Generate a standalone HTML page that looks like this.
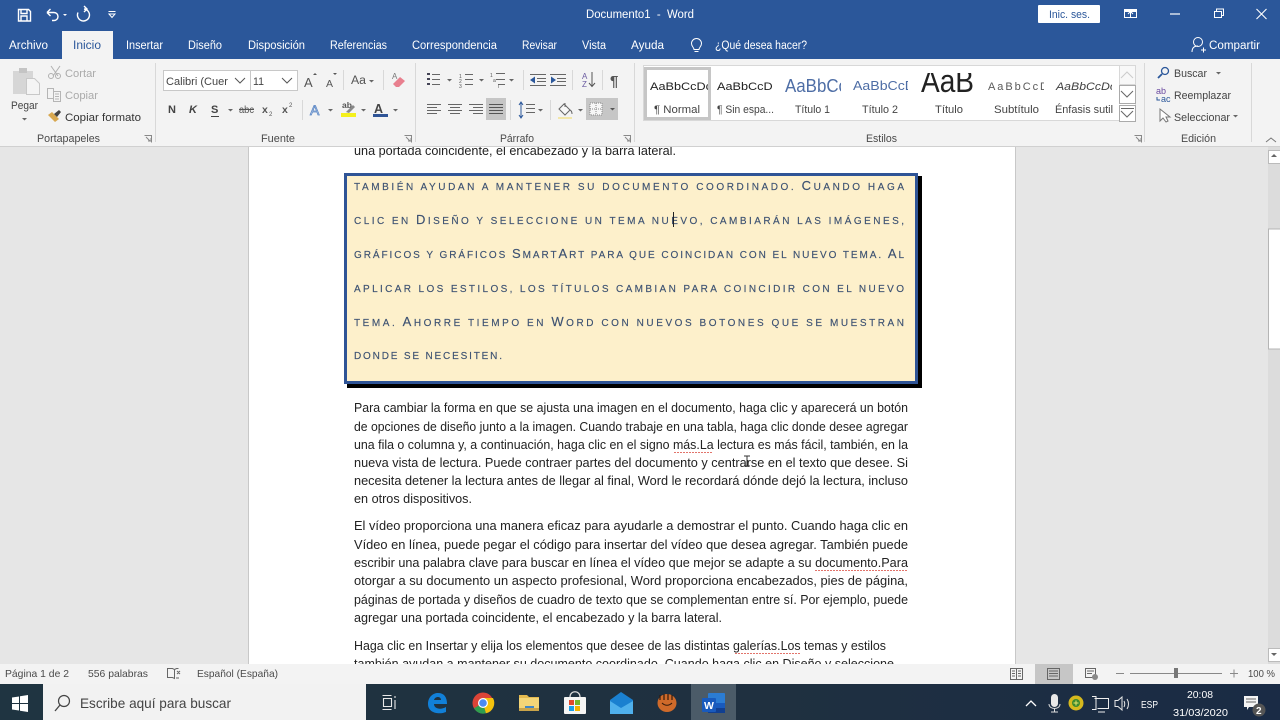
<!DOCTYPE html>
<html lang="es"><head><meta charset="utf-8"><title>Documento1 - Word</title>
<style>
html,body{margin:0;padding:0;width:1280px;height:720px;overflow:hidden;background:#e6e6e6}
svg{display:block;position:absolute;left:0;top:0;filter:blur(.3px)}
text{font-family:"Liberation Sans",sans-serif;white-space:pre}
.b{font-size:13px;fill:#222}
.c{font-size:10px;fill:#3d5272;stroke:#3d5272;stroke-width:.15}
.c tspan{font-size:13px}
.w{font-size:11.5px;fill:#fff}
.r{font-size:11px;fill:#444}
.g{font-size:11px;fill:#aaa}
.l{font-size:11px;fill:#4a4a4a}
.s{font-size:10.5px;fill:#4a4a4a}
.i{fill:none;stroke:#555;stroke-width:1}
.wi{fill:none;stroke:#fff;stroke-width:1.4}
.sq{fill:none;stroke:#d8463a;stroke-width:1;stroke-dasharray:2 1;opacity:.75}
</style></head><body>
<svg width="1280" height="720" viewBox="0 0 1280 720" xmlns="http://www.w3.org/2000/svg">
<defs>
<clipPath id="doc"><rect x="249" y="147" width="766" height="517"/></clipPath>
<clipPath id="p1"><rect x="645" y="70" width="63" height="30"/></clipPath>
<clipPath id="p2"><rect x="715" y="70" width="58" height="30"/></clipPath>
<clipPath id="p3"><rect x="783" y="70" width="58" height="30"/></clipPath>
<clipPath id="p4"><rect x="851" y="70" width="57" height="30"/></clipPath>
<clipPath id="p5"><rect x="918" y="73" width="58" height="30"/></clipPath>
<clipPath id="p6"><rect x="986" y="70" width="58" height="30"/></clipPath>
<clipPath id="p7"><rect x="1054" y="70" width="58" height="30"/></clipPath>
</defs>

<!-- document area -->
<rect width="1280" height="720" fill="#e6e6e6"/>
<rect x="249" y="147" width="766" height="517" fill="#fff"/>
<path d="M248.500 147V664M1015.500 147V664" stroke="#c8c8c8"/>
<!-- scrollbar -->
<rect x="1268" y="147" width="12" height="517" fill="#dcdcdc"/>
<rect x="1268.500" y="150.500" width="12" height="13" fill="#fff" stroke="#bbb"/>
<path d="M1271 157l3-3 3 3z" fill="#666"/>
<rect x="1268.500" y="229" width="12" height="120" fill="#fff" stroke="#b5b5b5"/>
<rect x="1268.500" y="648.500" width="12" height="13" fill="#fff" stroke="#bbb"/>
<path d="M1271 653l3 3 3-3z" fill="#666"/>

<g clip-path="url(#doc)">
<text class="b" x="354" y="155" textLength="322" lengthAdjust="spacingAndGlyphs">una portada coincidente, el encabezado y la barra lateral.</text>

<!-- shaded box -->
<rect x="347" y="176" width="575" height="212" fill="#000"/>
<rect x="344" y="173" width="574" height="211" fill="#2f5496"/>
<rect x="347" y="176" width="568" height="205" fill="#fdf0cb"/>
<text class="c" x="354" y="190" textLength="550" lengthAdjust="spacing">TAMBIÉN AYUDAN A MANTENER SU DOCUMENTO COORDINADO. <tspan>C</tspan>UANDO HAGA</text>
<text class="c" x="354" y="224" textLength="550" lengthAdjust="spacing">CLIC EN <tspan>D</tspan>ISEÑO Y SELECCIONE UN TEMA NUEVO, CAMBIARÁN LAS IMÁGENES,</text>
<text class="c" x="354" y="258" textLength="550" lengthAdjust="spacing">GRÁFICOS Y GRÁFICOS <tspan>S</tspan>MART<tspan>A</tspan>RT PARA QUE COINCIDAN CON EL NUEVO TEMA. <tspan>A</tspan>L</text>
<text class="c" x="354" y="292" textLength="550" lengthAdjust="spacing">APLICAR LOS ESTILOS, LOS TÍTULOS CAMBIAN PARA COINCIDIR CON EL NUEVO</text>
<text class="c" x="354" y="326" textLength="550" lengthAdjust="spacing">TEMA. <tspan>A</tspan>HORRE TIEMPO EN <tspan>W</tspan>ORD CON NUEVOS BOTONES QUE SE MUESTRAN</text>
<text class="c" x="354" y="359" textLength="148" lengthAdjust="spacing">DONDE SE NECESITEN.</text>
<path d="M673.500 212V227" stroke="#222"/>

<!-- paragraph 1 -->
<text class="b" x="354" y="412" textLength="554" lengthAdjust="spacingAndGlyphs">Para cambiar la forma en que se ajusta una imagen en el documento, haga clic y aparecerá un botón</text>
<text class="b" x="354" y="431" textLength="554" lengthAdjust="spacingAndGlyphs">de opciones de diseño junto a la imagen. Cuando trabaje en una tabla, haga clic donde desee agregar</text>
<text class="b" x="354" y="449" textLength="554" lengthAdjust="spacingAndGlyphs">una fila o columna y, a continuación, haga clic en el signo más.La lectura es más fácil, también, en la</text>
<text class="b" x="354" y="467" textLength="554" lengthAdjust="spacingAndGlyphs">nueva vista de lectura. Puede contraer partes del documento y centrarse en el texto que desee. Si</text>
<text class="b" x="354" y="485" textLength="554" lengthAdjust="spacingAndGlyphs">necesita detener la lectura antes de llegar al final, Word le recordará dónde dejó la lectura, incluso</text>
<text class="b" x="354" y="503" textLength="118" lengthAdjust="spacingAndGlyphs">en otros dispositivos.</text>
<path class="sq" d="M674 452.500H713"/>

<!-- paragraph 2 -->
<text class="b" x="354" y="530" textLength="554" lengthAdjust="spacingAndGlyphs">El vídeo proporciona una manera eficaz para ayudarle a demostrar el punto. Cuando haga clic en</text>
<text class="b" x="354" y="549" textLength="554" lengthAdjust="spacingAndGlyphs">Vídeo en línea, puede pegar el código para insertar del vídeo que desea agregar. También puede</text>
<text class="b" x="354" y="567" textLength="554" lengthAdjust="spacingAndGlyphs">escribir una palabra clave para buscar en línea el vídeo que mejor se adapte a su documento.Para</text>
<text class="b" x="354" y="585" textLength="554" lengthAdjust="spacingAndGlyphs">otorgar a su documento un aspecto profesional, Word proporciona encabezados, pies de página,</text>
<text class="b" x="354" y="604" textLength="554" lengthAdjust="spacingAndGlyphs">páginas de portada y diseños de cuadro de texto que se complementan entre sí. Por ejemplo, puede</text>
<text class="b" x="354" y="622" textLength="368" lengthAdjust="spacingAndGlyphs">agregar una portada coincidente, el encabezado y la barra lateral.</text>
<path class="sq" d="M815 570.500H908"/>

<!-- paragraph 3 -->
<text class="b" x="354" y="650" textLength="532" lengthAdjust="spacingAndGlyphs">Haga clic en Insertar y elija los elementos que desee de las distintas galerías.Los temas y estilos</text>
<text class="b" x="354" y="668" textLength="540" lengthAdjust="spacingAndGlyphs">también ayudan a mantener su documento coordinado. Cuando haga clic en Diseño y seleccione</text>
<path class="sq" d="M735 653.500H801"/>
<!-- I-beam -->
<path d="M744 456h6M747 456v10M744 466h6" stroke="#333" fill="none"/>
</g>

<!-- title bar + tabs -->
<rect width="1280" height="59" fill="#2b579a"/>
<rect x="62" y="31" width="51" height="28" fill="#f3f3f3"/>
<!-- QAT -->
<path d="M18.500 9.500h10l2 2v9.500h-12z M21 9.500v4h6v-4 M21 21v-5h6v5" class="wi"/>
<path d="M47 12.500h7a4 4 0 0 1 0 8h-2M47 12.500l3.500-3.500M47 12.500l3.500 3.500" class="wi"/>
<path d="M63 14l2 2 2-2z" fill="#fff"/>
<path d="M84 9a6 6 0 1 1-6 3.500M84 6l3 3-3 3" class="wi"/>
<path d="M108.500 11.500h7M109 14l3 3.500 3-3.500z" fill="none" stroke="#fff"/>
<!-- title -->
<text x="586" y="18" font-size="11.500" fill="#fff" textLength="108" lengthAdjust="spacingAndGlyphs">Documento1  -  Word</text>
<rect x="1038" y="5" width="62" height="18" rx="1" fill="#fff"/>
<text x="1049" y="18" font-size="11" fill="#2b579a" textLength="41" lengthAdjust="spacingAndGlyphs">Inic. ses.</text>
<rect x="1124.500" y="9.500" width="12" height="8" fill="none" stroke="#fff"/><rect x="1125" y="10" width="11" height="2" fill="#fff"/><path d="M1130.500 17v-5M1128 14l2.500-2.500 2.500 2.500" fill="none" stroke="#fff"/>
<path d="M1170 14h10" stroke="#fff" stroke-width="1.200"/>
<path d="M1214.500 11.500h7v6h-7zM1216.500 11v-2h7v6.500h-2" fill="none" stroke="#fff"/>
<path d="M1256.500 9l10 10M1266.500 9l-10 10" stroke="#fff" stroke-width="1.100"/>

<!-- tabs -->
<text class="w" x="9" y="49" textLength="39" lengthAdjust="spacingAndGlyphs">Archivo</text>
<text class="w" x="73" y="49" textLength="28" lengthAdjust="spacingAndGlyphs" style="fill:#2b579a">Inicio</text>
<text class="w" x="126" y="49" textLength="37" lengthAdjust="spacingAndGlyphs">Insertar</text>
<text class="w" x="188" y="49" textLength="34" lengthAdjust="spacingAndGlyphs">Diseño</text>
<text class="w" x="248" y="49" textLength="57" lengthAdjust="spacingAndGlyphs">Disposición</text>
<text class="w" x="330" y="49" textLength="57" lengthAdjust="spacingAndGlyphs">Referencias</text>
<text class="w" x="412" y="49" textLength="85" lengthAdjust="spacingAndGlyphs">Correspondencia</text>
<text class="w" x="522" y="49" textLength="35" lengthAdjust="spacingAndGlyphs">Revisar</text>
<text class="w" x="582" y="49" textLength="24" lengthAdjust="spacingAndGlyphs">Vista</text>
<text class="w" x="631" y="49" textLength="33" lengthAdjust="spacingAndGlyphs">Ayuda</text>
<path d="M694 49.500c0-2-2.500-3-2.500-6a5 5 0 0 1 10 0c0 3-2.500 4-2.500 6zM694.500 51.500h4" fill="none" stroke="#fff"/>
<text class="w" x="715" y="49" textLength="92" lengthAdjust="spacingAndGlyphs">¿Qué desea hacer?</text>
<circle cx="1198" cy="42" r="4.500" fill="none" stroke="#fff"/><path d="M1192 52c0-4 2-6 6-6M1201 50h5M1203.500 47.500v5" fill="none" stroke="#fff"/>
<text class="w" x="1209" y="49" textLength="51" lengthAdjust="spacingAndGlyphs">Compartir</text>

<!-- ribbon -->
<rect y="59" width="1280" height="87" fill="#f3f3f3"/>
<path d="M0 146.500H1280" stroke="#d0d0d0"/>
<path d="M155.500 63V142M415.500 63V142M634.500 63V142M1144.500 63V142M1251.500 63V142" stroke="#d8d8d8"/>

<!-- clipboard -->
<rect x="13" y="71" width="20" height="23" fill="#d6d6d6"/><rect x="19" y="68" width="8" height="5" fill="#c4c4c4"/>
<path d="M26.500 78.500h8l5 5v11h-13z" fill="#f4f4f4" stroke="#c8c8c8"/>
<text class="r" x="11" y="109" textLength="27" lengthAdjust="spacingAndGlyphs">Pegar</text>
<path d="M22 118l2.500 2.500 2.500-2.500z" fill="#666"/>
<path d="M51 66l7 10M60 66l-7 10" stroke="#b0b0b0" fill="none"/><circle cx="51" cy="76" r="2.500" fill="none" stroke="#b0b0b0"/><circle cx="58" cy="76" r="2.500" fill="none" stroke="#b0b0b0"/>
<text class="g" x="65" y="77" textLength="31" lengthAdjust="spacingAndGlyphs">Cortar</text>
<path d="M47.500 88.500h6v10h-6zM53.500 91.500h7v10h-7zM55 94h4M55 96.500h4M55 99h4" fill="none" stroke="#b5b5b5"/>
<text class="g" x="65" y="99" textLength="33" lengthAdjust="spacingAndGlyphs">Copiar</text>
<path d="M48 115l7 7 4-3-7-7z" fill="#d8a850"/><path d="M54 114l5-4 2 2-4 5z" fill="#444"/>
<text class="r" x="65" y="121" textLength="76" lengthAdjust="spacingAndGlyphs" style="fill:#333">Copiar formato</text>
<text class="l" x="37" y="142" textLength="63" lengthAdjust="spacingAndGlyphs">Portapapeles</text>
<path d="M144.500 135.500h7v7M146 137l4 4M148 141h3v-3" fill="none" stroke="#888"/>

<!-- font -->
<rect x="163.500" y="70.500" width="87" height="20" fill="#fff" stroke="#c8c8c8"/>
<rect x="250.500" y="70.500" width="47" height="20" fill="#fff" stroke="#c8c8c8"/>
<text class="r" x="166" y="85" textLength="62" lengthAdjust="spacingAndGlyphs">Calibri (Cuer</text>
<text class="r" x="253" y="85" textLength="11" lengthAdjust="spacingAndGlyphs">11</text>
<path d="M235 78l5 5 5-5M282 78l5 5 5-5" fill="none" stroke="#555"/>
<text x="304" y="87" font-size="13" fill="#555">A</text><path d="M313 75l2-2 2 2z" fill="#555"/>
<text x="326" y="87" font-size="10.500" fill="#555">A</text><path d="M333 73l2 2 2-2z" fill="#555"/>
<path d="M343.500 70V90M383.500 70V90" stroke="#d8d8d8"/>
<text x="351" y="84" font-size="11.500" fill="#555" textLength="15" lengthAdjust="spacingAndGlyphs">Aa</text>
<path d="M369 80l2.500 2.500 2.500-2.500z" fill="#666"/>
<path d="M393 84l7-7 5 4-6 6h-3z" fill="#e87f8e"/><text x="392" y="79" font-size="8" fill="#777">A</text>
<text x="168" y="113" font-size="11" font-weight="bold" fill="#444">N</text>
<text x="189" y="113" font-size="11" font-weight="bold" font-style="italic" fill="#444">K</text>
<text x="211" y="113" font-size="11" font-weight="bold" fill="#444">S</text><path d="M211 116.500h8" stroke="#444"/>
<path d="M228 109l2.500 2.500 2.500-2.500z" fill="#666"/>
<text x="239" y="113" font-size="10" fill="#555" textLength="15" lengthAdjust="spacingAndGlyphs">abc</text><path d="M239 109.500h15" stroke="#555"/>
<text x="262" y="113" font-size="10.500" font-weight="bold" fill="#555">x</text><text x="269" y="116" font-size="6" fill="#555">2</text>
<text x="282" y="113" font-size="10.500" font-weight="bold" fill="#555">x</text><text x="289" y="107" font-size="6" fill="#555">2</text>
<path d="M302.500 100V120" stroke="#d8d8d8"/>
<text x="310" y="115" font-size="14" fill="#d8e6f6" stroke="#5b86c4" stroke-width=".8">A</text>
<path d="M328 109l2.500 2.500 2.500-2.500z" fill="#666"/>
<text x="342" y="108" font-size="8.500" fill="#555" font-weight="bold">ab</text><path d="M346 112l7-7 2 2-6 6z" fill="#888"/>
<rect x="341" y="113" width="15" height="4" fill="#f4f01c"/>
<path d="M361 109l2.500 2.500 2.500-2.500z" fill="#666"/>
<text x="374" y="113" font-size="12.500" fill="#444" font-weight="bold">A</text>
<rect x="373" y="114" width="15" height="3" fill="#2f5496"/>
<path d="M393 109l2.500 2.500 2.500-2.500z" fill="#666"/>
<text class="l" x="261" y="142" textLength="34" lengthAdjust="spacingAndGlyphs">Fuente</text>
<path d="M404.500 135.500h7v7M406 137l4 4M408 141h3v-3" fill="none" stroke="#888"/>

<!-- paragraph -->
<g fill="none" stroke="#666">
<path d="M427 74h3M427 79h3M427 84h3" stroke="#445" stroke-width="2"/><path d="M432 74.500h8M432 79.500h8M432 84.500h8"/>
<path d="M465 74.500h8M465 79.500h8M465 84.500h8"/>
<path d="M496 73.500h9M496 79.500h9M498 84.500h7"/>
<path d="M530 74.500h16M537 78.500h9M537 81.500h9M530 85.500h16"/>
<path d="M550 74.500h16M550 78.500h9M550 81.500h9M550 85.500h16" transform="translate(7 0)" style="display:none"/>
<path d="M550 74.500h16M557 78.500h9M557 81.500h9M550 85.500h16"/>
</g>
<text x="459" y="78" font-size="5" fill="#555">1</text><text x="459" y="83" font-size="5" fill="#555">2</text><text x="459" y="88" font-size="5" fill="#555">3</text>
<text x="490" y="77" font-size="5" fill="#555">1</text><text x="493" y="82" font-size="5" fill="#555">a</text><text x="498" y="88" font-size="5" fill="#555">i</text>
<path d="M447 79l2.500 2.500 2.500-2.500zM479 79l2.500 2.500 2.500-2.500zM509 79l2.500 2.500 2.500-2.500z" fill="#666"/>
<path d="M530 80l5-3.500v7zM556 80l-5-3.500v7z" fill="#2b579a"/>
<path d="M523.500 70V90M572.500 70V90M602.500 70V90M510.500 100V120M550.500 100V120" stroke="#d8d8d8"/>
<text x="582" y="79" font-size="8" fill="#6a5aa0">A</text><text x="582" y="87" font-size="8" fill="#6a5aa0">Z</text>
<path d="M592 72v14M589 83l3 3.500 3-3.500" fill="none" stroke="#555"/>
<text x="610" y="86" font-size="15" fill="#555" font-weight="bold">¶</text>
<rect x="486" y="98" width="20" height="22" fill="#c6c6c6"/>
<g fill="none" stroke="#666">
<path d="M427 104.500h14M427 107.500h10M427 110.500h14M427 113.500h10"/>
<path d="M448 104.500h14M450 107.500h10M448 110.500h14M450 113.500h10"/>
<path d="M469 104.500h14M473 107.500h10M469 110.500h14M473 113.500h10"/>
<path d="M489 104.500h14M489 107.500h14M489 110.500h14M489 113.500h14" stroke="#555"/>
<path d="M526 104.500h9M526 108.500h9M526 112.500h9"/>
</g>
<path d="M521 103v14M519 105l2-3 2 3M519 115l2 3 2-3" fill="none" stroke="#2b579a"/>
<path d="M538 109l2.500 2.500 2.500-2.500zM578 109l2.500 2.500 2.500-2.500z" fill="#666"/>
<path d="M559 109l5-5 6 6-5 5z" fill="#f8f8f8" stroke="#666"/><path d="M565 103v4M570 110c2 1 2 3 2 4" fill="none" stroke="#666"/><path d="M558 118h14" stroke="#f2e6a8" stroke-width="2"/>
<rect x="586" y="98" width="32" height="22" fill="#c6c6c6"/>
<rect x="590" y="103" width="12" height="12" fill="#f6f6f6" stroke="#888" stroke-dasharray="1 1"/><path d="M596 103v12M590 109h12" stroke="#888" stroke-dasharray="1 1"/>
<path d="M610 108l2.500 2.500 2.500-2.500z" fill="#555"/>
<text class="l" x="500" y="142" textLength="34" lengthAdjust="spacingAndGlyphs">Párrafo</text>
<path d="M623.500 135.500h7v7M625 137l4 4M627 141h3v-3" fill="none" stroke="#888"/>

<!-- styles -->
<rect x="643.500" y="65.500" width="492" height="55" fill="#fff" stroke="#d8d8d8"/>
<rect x="645.500" y="68.500" width="64" height="50" fill="none" stroke="#c6c6c6" stroke-width="3"/>
<text clip-path="url(#p1)" x="650" y="90" font-size="11" fill="#222" textLength="62" lengthAdjust="spacingAndGlyphs">AaBbCcDc</text>
<text clip-path="url(#p2)" x="717" y="90" font-size="11" fill="#222" textLength="62" lengthAdjust="spacingAndGlyphs">AaBbCcDc</text>
<text clip-path="url(#p3)" x="785" y="92" font-size="18" fill="#2f5496" textLength="62" lengthAdjust="spacingAndGlyphs" opacity=".85">AaBbCc</text>
<text clip-path="url(#p4)" x="853" y="90" font-size="13" fill="#2f5496" textLength="62" lengthAdjust="spacingAndGlyphs" opacity=".85">AaBbCcD</text>
<text clip-path="url(#p5)" x="921" y="92" font-size="32" fill="#222" textLength="53" lengthAdjust="spacingAndGlyphs">AaB</text>
<text clip-path="url(#p6)" x="988" y="90" font-size="11" fill="#5a5a5a" textLength="60" lengthAdjust="spacing">AaBbCcD</text>
<text clip-path="url(#p7)" x="1056" y="90" font-size="11" font-style="italic" fill="#404040" textLength="60" lengthAdjust="spacingAndGlyphs">AaBbCcDc</text>
<text class="r" x="654" y="113" textLength="46" lengthAdjust="spacingAndGlyphs">¶ Normal</text>
<text class="r" x="717" y="113" textLength="57" lengthAdjust="spacingAndGlyphs">¶ Sin espa...</text>
<text class="r" x="795" y="113" textLength="35" lengthAdjust="spacingAndGlyphs">Título 1</text>
<text class="r" x="862" y="113" textLength="36" lengthAdjust="spacingAndGlyphs">Título 2</text>
<text class="r" x="935" y="113" textLength="28" lengthAdjust="spacingAndGlyphs">Título</text>
<text class="r" x="994" y="113" textLength="45" lengthAdjust="spacingAndGlyphs">Subtítulo</text>
<text class="r" x="1055" y="113" textLength="58" lengthAdjust="spacingAndGlyphs">Énfasis sutil</text>
<rect x="1119.500" y="65.500" width="16" height="19" fill="#f8f8f8" stroke="#d8d8d8"/>
<rect x="1119.500" y="85.500" width="16" height="18" fill="#fff" stroke="#aaa"/>
<rect x="1119.500" y="105.500" width="16" height="16" fill="#fff" stroke="#aaa"/>
<path d="M1121 78l6-6 6 6" fill="none" stroke="#ccc"/>
<path d="M1121 91l6 6 6-6" fill="none" stroke="#666"/>
<path d="M1121 108.500h13M1121 111l6 6 6-6" fill="none" stroke="#666"/>
<text class="l" x="866" y="142" textLength="31" lengthAdjust="spacingAndGlyphs">Estilos</text>
<path d="M1134.500 135.500h7v7M1136 137l4 4M1138 141h3v-3" fill="none" stroke="#888"/>

<!-- editing -->
<circle cx="1165" cy="71" r="3.500" fill="none" stroke="#2b579a" stroke-width="1.300"/><path d="M1162 74l-4 4" stroke="#2b579a" stroke-width="1.800"/>
<text class="r" x="1174" y="77" textLength="33" lengthAdjust="spacingAndGlyphs">Buscar</text>
<path d="M1216 72l2.500 2.500 2.500-2.500z" fill="#666"/>
<text x="1156" y="94" font-size="9" fill="#6a4aa0">ab</text><text x="1161" y="102" font-size="9" fill="#2b579a">ac</text>
<path d="M1157 97v3h3" fill="none" stroke="#2b579a"/>
<text class="r" x="1174" y="99" textLength="57" lengthAdjust="spacingAndGlyphs">Reemplazar</text>
<path d="M1160 109v12l3-3 3 4 2-1-2-4h4z" fill="#fff" stroke="#777"/>
<text class="r" x="1174" y="121" textLength="56" lengthAdjust="spacingAndGlyphs">Seleccionar</text>
<path d="M1233 115l2.500 2.500 2.500-2.500z" fill="#666"/>
<text class="l" x="1181" y="142" textLength="35" lengthAdjust="spacingAndGlyphs">Edición</text>
<path d="M1266 142l5-4 5 4" fill="none" stroke="#777"/>

<!-- status bar -->
<rect y="664" width="1280" height="20" fill="#f3f3f3"/>
<text class="s" x="5" y="677" textLength="64" lengthAdjust="spacingAndGlyphs">Página 1 de 2</text>
<text class="s" x="88" y="677" textLength="60" lengthAdjust="spacingAndGlyphs">556 palabras</text>
<path d="M167.500 668.500h5l2 1v9l-2-1h-5zM174.500 669.500l2-1h2M177 671l3 3M180 671l-3 3M176 678h3" fill="none" stroke="#666"/>
<text class="s" x="197" y="677" textLength="81" lengthAdjust="spacingAndGlyphs">Español (España)</text>
<rect x="1035" y="664" width="38" height="20" fill="#c6c6c6"/>
<path d="M1010.500 668.500h12v11h-12zM1016.500 668.500v11M1012 671h3M1012 673.500h3M1012 676h3M1018 671h3M1018 673.500h3M1018 676h3" fill="none" stroke="#666"/>
<path d="M1047.500 668.500h12v11h-12zM1049 671h9M1049 673.500h9M1049 676h9" fill="none" stroke="#666"/>
<path d="M1085.500 668.500h10v9h-10zM1087 671h7M1087 673.500h5" fill="none" stroke="#666"/><circle cx="1095" cy="677" r="3" fill="#888"/>
<path d="M1116 673.500h8M1130 673.500h92M1230 673.500h8M1234 669.500v8" stroke="#888" fill="none"/>
<rect x="1174" y="668" width="4" height="10" fill="#777"/>
<text class="s" x="1248" y="677" textLength="27" lengthAdjust="spacingAndGlyphs">100 %</text>

<!-- taskbar -->
<defs><linearGradient id="tb" x1="0" x2="1" y1="0" y2="0"><stop offset="0" stop-color="#1f3441"/><stop offset=".6" stop-color="#1f3040"/><stop offset="1" stop-color="#1a2b45"/></linearGradient></defs>
<rect y="684" width="1280" height="36" fill="url(#tb)"/>
<path d="M12 697.500l7-1v6.500h-7zM20 696.300l8-1.300v8h-8zM12 704h7v6.500l-7-1zM20 704h8v8l-8-1.300z" fill="#fff"/>
<rect x="43" y="684" width="323" height="36" fill="#f2f2f2"/>
<circle cx="64" cy="701" r="5.500" fill="none" stroke="#444" stroke-width="1.200"/><path d="M60 705l-5 6" stroke="#444" stroke-width="1.300"/>
<text x="80" y="708" font-size="14" fill="#444" textLength="151" lengthAdjust="spacingAndGlyphs">Escribe aquí para buscar</text>
<!-- task view -->
<path d="M382.500 695.500h9M382.500 709.500h9M383.500 698.500h8v8h-8zM395 696v2M395 700v9" fill="none" stroke="#e8e8e8" stroke-width="1.100"/>
<!-- edge -->
<path d="M428 704c0-7 5-11 10-11 6 0 9 4 9 11h-13c0 5 7 6 12 3v5c-7 3-18 1-18-8zM434 700h7c0-4-6-4-7 0z" fill="#1180d8" fill-rule="evenodd"/>
<!-- chrome -->
<circle cx="483" cy="703" r="10.500" fill="#db4437"/>
<path d="M483 703l-9 5.300a10.500 10.500 0 0 0 12 5z" fill="#2f9e4f"/>
<path d="M483 703l3 10.300a10.500 10.500 0 0 0 7-15.300h-10z" fill="#f4c20d"/>
<circle cx="483" cy="703" r="5" fill="#fff"/><circle cx="483" cy="703" r="3.800" fill="#4a8af4"/>
<!-- folder -->
<path d="M519 695h8l2 2h10v14h-20z" fill="#e3b94f"/><rect x="519" y="698" width="20" height="13" fill="#f3d577"/><path d="M526 711v-4h7v4" fill="none" stroke="#3f86c7" stroke-width="2"/>
<rect x="519" y="708" width="20" height="3" fill="#c9a44a"/>
<!-- store -->
<rect x="564" y="697" width="22" height="17" rx="1" fill="#f5f5f5"/><path d="M570 697c0-7 10-7 10 0" fill="none" stroke="#ddd" stroke-width="1.300"/>
<rect x="569" y="700" width="5" height="5" fill="#e2492b"/><rect x="575" y="700" width="5" height="5" fill="#75b72a"/><rect x="569" y="706" width="5" height="5" fill="#1aa0e8"/><rect x="575" y="706" width="5" height="5" fill="#f4b400"/>
<!-- mail -->
<path d="M610 700l11-8 12 8v13h-23z" fill="#1a80d0"/><path d="M610 701l11 7 12-7v13h-23z" fill="#4fb0ec"/>
<!-- glove -->
<ellipse cx="667" cy="703" rx="9.500" ry="9" fill="#cf6a2a"/><path d="M660 695v5M664 694v6M668 694v6M672 695v5" stroke="#321a0c" stroke-width="1.200"/><path d="M662 703c3 3 7 3 10 0" fill="none" stroke="#321a0c"/>
<!-- word -->
<rect x="691" y="684" width="45" height="36" fill="#4b5b68"/>
<rect x="708" y="693" width="17" height="20" rx="1" fill="#2b7cd3"/><rect x="708" y="703" width="17" height="5" fill="#185abd"/><rect x="708" y="708" width="17" height="5" fill="#103f91"/>
<rect x="702" y="698" width="14" height="14" rx="1" fill="#185abd"/>
<text x="704" y="709" font-size="10.500" font-weight="bold" fill="#fff">W</text>
<!-- tray -->
<path d="M1026 706l5-5 5 5" fill="none" stroke="#fff" stroke-width="1.300"/>
<rect x="1051" y="694" width="7" height="13" rx="3.500" fill="#e8e8e8"/><path d="M1049 704c0 6 11 6 11 0M1054.500 709v3M1051 712h7" fill="none" stroke="#ddd"/>
<circle cx="1076" cy="703" r="7.500" fill="#d6b91e"/><circle cx="1076" cy="703" r="4" fill="#3d8a2e"/><path d="M1076 700.500v5M1073.500 703h5" stroke="#e6e66a"/>
<path d="M1094.500 698.500h14v10h-11M1092 696.500h4v13h-4M1098 712h7" fill="none" stroke="#eee"/>
<path d="M1115 700.500h3l4-3.500v13l-4-3.500h-3zM1124 701c1 2 1 4 0 6M1127 699c2 3 2 7 0 10" fill="none" stroke="#e8e8e8"/>
<text x="1141" y="708" font-size="10.500" fill="#fff" textLength="17" lengthAdjust="spacingAndGlyphs">ESP</text>
<text x="1187" y="698" font-size="10.500" fill="#fff" textLength="26" lengthAdjust="spacingAndGlyphs">20:08</text>
<text x="1173" y="716" font-size="10.500" fill="#fff" textLength="55" lengthAdjust="spacingAndGlyphs">31/03/2020</text>
<path d="M1244 696h14v11h-9l-2 3v-3h-3z" fill="#f4f4f4"/><path d="M1246 699h10M1246 702h10" stroke="#666"/>
<circle cx="1259" cy="710" r="6.500" fill="#555"/><text x="1256" y="714" font-size="10" font-weight="bold" fill="#fff">2</text>
</svg>
</body></html>
